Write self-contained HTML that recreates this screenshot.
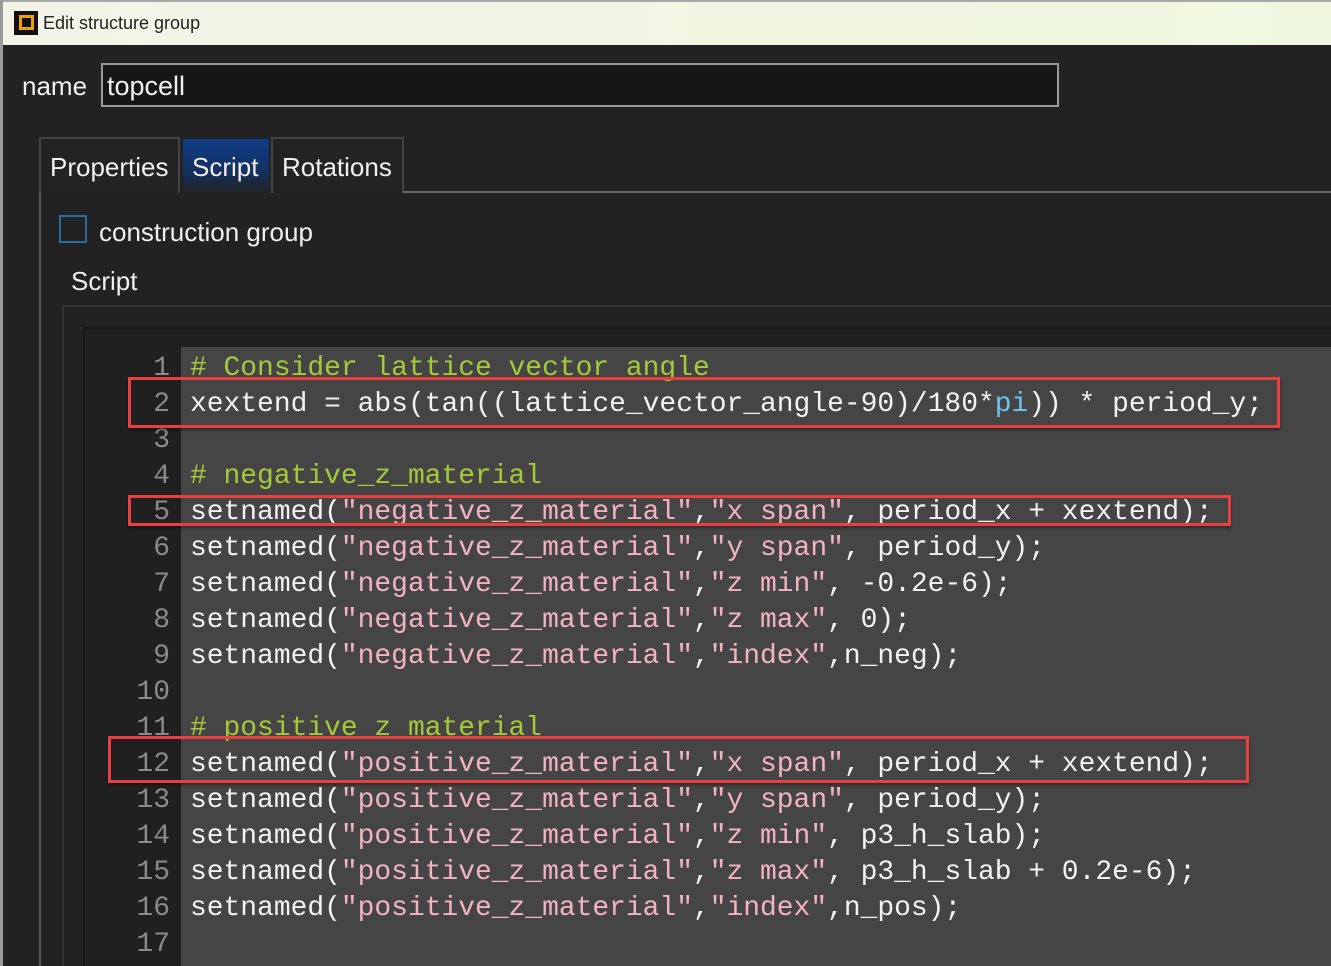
<!DOCTYPE html>
<html><head><meta charset="utf-8"><style>
*{margin:0;padding:0;box-sizing:border-box}
body{width:1331px;height:966px;overflow:hidden;background:#222;position:relative;font-family:"Liberation Sans",sans-serif;color:#fff}
.a{position:absolute}
.title{left:3px;top:0;width:1328px;height:45px;background:linear-gradient(90deg,#f4f3e8,#eff8df);border-top:2px solid #aaa}
.ui{font-size:26px;color:#f0f0f0}
.code{position:absolute;left:190px;font-family:"Liberation Mono",monospace;font-size:27.95px;white-space:pre;color:#f2f2f2;line-height:36px}
.ln{position:absolute;left:100px;width:70px;text-align:right;font-family:"Liberation Mono",monospace;font-size:27.95px;color:#8a8a8a;line-height:36px}
.c{color:#a6c93a}.s{color:#f3b3c3}.b{color:#6ec3ef}
.box{position:absolute;border:3px solid #e8403f;box-shadow:0 2px 3px rgba(0,0,0,.4)}
</style></head><body>
<div class="a" style="left:0;top:0;width:3px;height:966px;background:#9a9a9a"></div>
<div class="a title"></div>
<div class="a" style="left:14px;top:11px;width:24px;height:24px;background:#111"></div>
<div class="a" style="left:19px;top:15px;width:15px;height:15px;border:3px solid #f0a000"></div>
<div class="a" style="left:43px;top:13px;font-size:18px;color:#222">Edit structure group</div>

<div class="a ui" style="left:22px;top:71px">name</div>
<div class="a" style="left:101px;top:63px;width:958px;height:44px;border:2px solid #999;background:#161616"></div>
<div class="a ui" style="left:107px;top:71px;font-size:27px">topcell</div>

<!-- tabs -->
<div class="a" style="left:39px;top:137px;width:141px;height:56px;border:2px solid #444;border-bottom:none;background:#232323"></div>
<div class="a ui" style="left:50px;top:152px">Properties</div>
<div class="a" style="left:183px;top:139px;width:86px;height:54px;background:linear-gradient(#0f3d86,#143060 60%,#222)"></div>
<div class="a ui" style="left:192px;top:152px">Script</div>
<div class="a" style="left:271px;top:137px;width:133px;height:56px;border:2px solid #444;border-bottom:none;background:#232323"></div>
<div class="a ui" style="left:282px;top:152px">Rotations</div>
<div class="a" style="left:403px;top:191px;width:928px;height:2px;background:#666"></div>
<div class="a" style="left:39px;top:192px;width:2px;height:774px;background:#555"></div>

<div class="a" style="left:59px;top:215px;width:28px;height:28px;border:2px solid #2a6aa3"></div>
<div class="a ui" style="left:99px;top:217px">construction group</div>
<div class="a ui" style="left:71px;top:266px">Script</div>

<div class="a" style="left:62px;top:305px;width:1269px;height:661px;border-top:2px solid #333;border-left:2px solid #333;background:#222"></div>
<div class="a" style="left:83px;top:327px;width:1248px;height:639px;border-top:2px solid #181818;border-left:2px solid #181818;background:#202020"></div>
<div class="a" style="left:181px;top:347px;width:1150px;height:619px;background:#454545"></div>

<div class="ln" style="top:351px">1<br>2<br>3<br>4<br>5<br>6<br>7<br>8<br>9<br>10<br>11<br>12<br>13<br>14<br>15<br>16<br>17</div>
<div class="code" style="top:351px"><span class="c"># Consider lattice vector angle</span>
xextend = abs(tan((lattice_vector_angle-90)/180*<span class="b">pi</span>)) * period_y;

<span class="c"># negative_z_material</span>
setnamed(<span class="s">"negative_z_material"</span>,<span class="s">"x span"</span>, period_x + xextend);
setnamed(<span class="s">"negative_z_material"</span>,<span class="s">"y span"</span>, period_y);
setnamed(<span class="s">"negative_z_material"</span>,<span class="s">"z min"</span>, -0.2e-6);
setnamed(<span class="s">"negative_z_material"</span>,<span class="s">"z max"</span>, 0);
setnamed(<span class="s">"negative_z_material"</span>,<span class="s">"index"</span>,n_neg);

<span class="c"># positive_z_material</span>
setnamed(<span class="s">"positive_z_material"</span>,<span class="s">"x span"</span>, period_x + xextend);
setnamed(<span class="s">"positive_z_material"</span>,<span class="s">"y span"</span>, period_y);
setnamed(<span class="s">"positive_z_material"</span>,<span class="s">"z min"</span>, p3_h_slab);
setnamed(<span class="s">"positive_z_material"</span>,<span class="s">"z max"</span>, p3_h_slab + 0.2e-6);
setnamed(<span class="s">"positive_z_material"</span>,<span class="s">"index"</span>,n_pos);
</div>

<div class="box" style="left:128px;top:377px;width:1152px;height:51px"></div>
<div class="box" style="left:128px;top:495px;width:1103px;height:31px"></div>
<div class="box" style="left:108px;top:736px;width:1141px;height:47px"></div>
</body></html>
